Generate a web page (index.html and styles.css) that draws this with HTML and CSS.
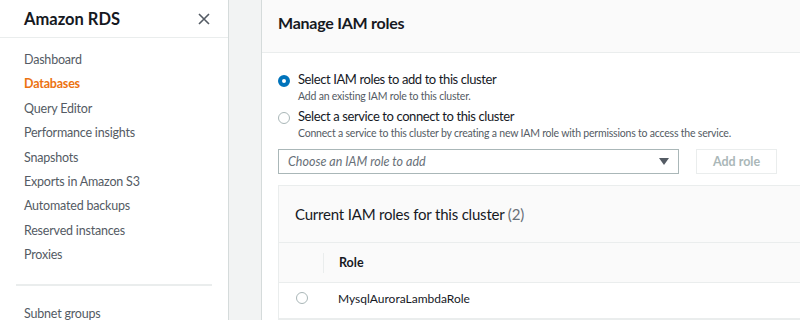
FILE: index.html
```html
<!DOCTYPE html>
<html lang="en">
<head>
    <meta charset="UTF-8">
    <title>Manage IAM roles</title>
    <link rel="stylesheet" href="styles.css">
</head>
<body>
    <div class="sidebar">
        <div class="sidebar-header">
            <span class="brand">Amazon RDS</span>
            <svg class="close" width="14" height="14" viewBox="0 0 14 14">
                <path d="M2 2 L12 12 M12 2 L2 12" stroke="#545b64" stroke-width="1.6" fill="none"/>
            </svg>
        </div>
        <ul class="nav">
            <li>Dashboard</li>
            <li class="active">Databases</li>
            <li>Query Editor</li>
            <li>Performance insights</li>
            <li>Snapshots</li>
            <li>Exports in Amazon S3</li>
            <li>Automated backups</li>
            <li>Reserved instances</li>
            <li>Proxies</li>
        </ul>
        <div class="nav-divider"></div>
        <ul class="nav">
            <li>Subnet groups</li>
        </ul>
    </div>

    <div class="gutter"></div>

    <div class="panel">
        <div class="panel-header">Manage IAM roles</div>
        <div class="panel-body">
            <div class="option">
                <span class="radio checked"></span>
                <div>
                    <div class="option-label">Select IAM roles to add to this cluster</div>
                    <div class="option-desc">Add an existing IAM role to this cluster.</div>
                </div>
            </div>
            <div class="option">
                <span class="radio"></span>
                <div>
                    <div class="option-label">Select a service to connect to this cluster</div>
                    <div class="option-desc">Connect a service to this cluster by creating a new IAM role with permissions to access the service.</div>
                </div>
            </div>

            <div class="add-row">
                <div class="select">
                    <span>Choose an IAM role to add</span>
                    <svg width="10" height="7" viewBox="0 0 10 7"><path d="M0 0 H10 L5 7 Z" fill="#545b64"/></svg>
                </div>
                <div class="btn disabled">Add role</div>
            </div>

            <div class="table-box">
                <div class="table-title">Current IAM roles for this cluster <span class="count">(2)</span></div>
                <div class="table-head">
                    <div class="col-select"></div>
                    <div class="col-role">Role</div>
                </div>
                <div class="table-row">
                    <div class="col-select"><span class="radio"></span></div>
                    <div class="col-role">MysqlAuroraLambdaRole</div>
                </div>
            </div>
        </div>
    </div>
</body>
</html>
```

FILE: styles.css
```css
/* Console page: side navigation + IAM roles panel */
body {
    margin: 0;
    height: 320px;
    overflow: hidden;
    display: flex;
    font-family: Lato, "Open Sans", sans-serif;
    color: #16191f;
    background: #f2f3f3;
}

.sidebar {
    width: 228px;
    flex-shrink: 0;
    background: #fff;
    border-right: 1px solid #d5dbdb;
}

.sidebar-header {
    height: 37px;
    display: flex;
    align-items: center;
    justify-content: space-between;
    padding: 0 17px 0 24px;
    border-bottom: 1px solid #eaeded;
}

.brand {
    font-size: 16.5px;
    font-weight: 700;
}

.nav {
    list-style: none;
    margin: 0;
    padding: 10px 0 0 24px;
}

.nav li {
    font-size: 12.5px;
    letter-spacing: -0.2px;
    line-height: 24.4px;
    color: #545b64;
}

.nav li.active {
    color: #ec7211;
    font-weight: 700;
}

.nav-divider {
    margin: 16px 16px 6px 16px;
    border-top: 2px solid #eaeded;
}

.gutter {
    width: 32px;
    flex-shrink: 0;
    border-right: 1px solid #d5dbdb;
}

.panel {
    width: 700px;
    flex-shrink: 0;
    background: #fff;
}

.panel-header {
    height: 53px;
    box-sizing: border-box;
    padding: 13px 16px 0;
    background: #fafafa;
    border-bottom: 1px solid #eaeded;
    font-size: 16px;
    letter-spacing: -0.25px;
    font-weight: 700;
}

.panel-body {
    padding: 17px 16px 0;
}

.option {
    display: flex;
    align-items: flex-start;
    gap: 8px;
    margin-bottom: 4px;
}

.option .radio {
    margin-top: 5px;
}

.radio {
    width: 12px;
    height: 12px;
    box-sizing: border-box;
    border-radius: 50%;
    border: 1px solid #aab7b8;
    background: #fff;
    flex-shrink: 0;
    display: inline-block;
}

.radio.checked {
    border: 4px solid #0073bb;
}

.option-label {
    font-size: 13px;
    letter-spacing: -0.4px;
    line-height: 19px;
}

.option-desc {
    font-size: 10.5px;
    letter-spacing: -0.2px;
    line-height: 14px;
    color: #545b64;
}

.add-row {
    display: flex;
    gap: 17px;
    margin-top: 9px;
}

.select {
    width: 401px;
    height: 25px;
    box-sizing: border-box;
    border: 1px solid #aab7b8;
    display: flex;
    align-items: center;
    justify-content: space-between;
    padding: 0 9px;
    font-size: 12.5px;
    font-style: italic;
    color: #687078;
}

.btn {
    width: 81px;
    height: 25px;
    box-sizing: border-box;
    border: 1px solid #eaeded;
    display: flex;
    align-items: center;
    justify-content: center;
    font-size: 12.5px;
    font-weight: 700;
}

.btn.disabled {
    color: #aab7b8;
}

.table-box {
    margin-top: 11px;
    width: 600px;
    border: 1px solid #eaeded;
    border-right: none;
}

.table-title {
    height: 57px;
    box-sizing: border-box;
    padding: 19px 16px 0;
    background: #fafafa;
    border-bottom: 1px solid #eaeded;
    font-size: 15px;
    letter-spacing: -0.2px;
}

.count {
    color: #687078;
}

.table-head, .table-row {
    display: flex;
    align-items: center;
    box-sizing: border-box;
    border-bottom: 1px solid #eaeded;
}

.table-head {
    height: 40px;
    background: #fafafa;
    font-size: 12.5px;
    font-weight: 700;
}

.table-row {
    height: 36px;
    padding-bottom: 5px;
    font-size: 12px;
}

.col-select {
    width: 43px;
    height: 20px;
    display: flex;
    align-items: center;
    justify-content: center;
    padding-left: 1px;
}

.table-head .col-select {
    border-right: 1px solid #eaeded;
}

.col-role {
    padding-left: 15px;
}
```
